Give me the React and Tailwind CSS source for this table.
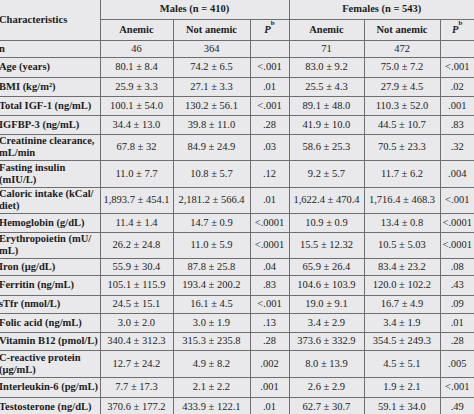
import React from 'react';

const rows = [
  { label: 'n', h: 'h-[17px]', v: ['46', '364', '', '71', '472', ''] },
  { label: 'Age (years)', h: 'h-[20px]', v: ['80.1 ± 8.4', '74.2 ± 6.5', '<.001', '83.0 ± 9.2', '75.0 ± 7.2', '<.001'] },
  { label: 'BMI (kg/m²)', h: 'h-[19px]', v: ['25.9 ± 3.3', '27.1 ± 3.3', '.01', '25.5 ± 4.3', '27.9 ± 4.5', '.02'] },
  { label: 'Total IGF-1 (ng/mL)', h: 'h-[19px]', v: ['100.1 ± 54.0', '130.2 ± 56.1', '<.001', '89.1 ± 48.0', '110.3 ± 52.0', '.001'] },
  { label: 'IGFBP-3 (ng/mL)', h: 'h-[19px]', v: ['34.4 ± 13.0', '39.8 ± 11.0', '.28', '41.9 ± 10.0', '44.5 ± 10.7', '.83'] },
  { label: ['Creatinine clearance,', 'mL/min'], h: 'h-[26px]', v: ['67.8 ± 32', '84.9 ± 24.9', '.03', '58.6 ± 25.3', '70.5 ± 23.3', '.32'] },
  { label: ['Fasting insulin', '(mIU/L)'], h: 'h-[27px]', v: ['11.0 ± 7.7', '10.8 ± 5.7', '.12', '9.2 ± 5.7', '11.7 ± 6.2', '.004'] },
  { label: ['Caloric intake (kCal/', 'diet)'], h: 'h-[26px]', v: ['1,893.7 ± 454.1', '2,181.2 ± 566.4', '.01', '1,622.4 ± 470.4', '1,716.4 ± 468.3', '<.001'] },
  { label: 'Hemoglobin (g/dL)', h: 'h-[19px]', v: ['11.4 ± 1.4', '14.7 ± 0.9', '<.0001', '10.9 ± 0.9', '13.4 ± 0.8', '<.0001'] },
  { label: ['Erythropoietin (mU/', 'mL)'], h: 'h-[26px]', v: ['26.2 ± 24.8', '11.0 ± 5.9', '<.0001', '15.5 ± 12.32', '10.5 ± 5.03', '<.0001'] },
  { label: 'Iron (μg/dL)', h: 'h-[17px]', v: ['55.9 ± 30.4', '87.8 ± 25.8', '.04', '65.9 ± 26.4', '83.4 ± 23.2', '.08'] },
  { label: 'Ferritin (ng/mL)', h: 'h-[20px]', v: ['105.1 ± 115.9', '193.4 ± 200.2', '.83', '104.6 ± 103.9', '120.0 ± 102.2', '.43'] },
  { label: 'sTfr (nmol/L)', h: 'h-[18px]', v: ['24.5 ± 15.1', '16.1 ± 4.5', '<.001', '19.0 ± 9.1', '16.7 ± 4.9', '.09'] },
  { label: 'Folic acid (ng/mL)', h: 'h-[19px]', v: ['3.0 ± 2.0', '3.0 ± 1.9', '.13', '3.4 ± 2.9', '3.4 ± 1.9', '.01'] },
  { label: 'Vitamin B12 (pmol/L)', h: 'h-[18px]', v: ['340.4 ± 312.3', '315.3 ± 235.8', '.28', '373.6 ± 332.9', '354.5 ± 249.3', '.28'] },
  { label: ['C-reactive protein', '(μg/mL)'], h: 'h-[27px]', v: ['12.7 ± 24.2', '4.9 ± 8.2', '.002', '8.0 ± 13.9', '4.5 ± 5.1', '.005'] },
  { label: 'Interleukin-6 (pg/mL)', h: 'h-[20px]', v: ['7.7 ± 17.3', '2.1 ± 2.2', '.001', '2.6 ± 2.9', '1.9 ± 2.1', '<.001'] },
  { label: 'Testosterone (ng/dL)', h: 'h-[20px]', v: ['370.6 ± 177.2', '433.9 ± 122.1', '.01', '62.7 ± 30.7', '59.1 ± 34.0', '.49'] },
];

const cell = 'border-b border-r border-[#6e6e70] p-0 align-middle';

const Pb = () => (
  <span>
    <i>P</i>
    <sup className="text-[7px] align-[4px]">b</sup>
  </span>
);

export default function App() {
  return (
    <div className="w-[474px] h-[414px] overflow-hidden bg-[#e9e9eb] text-[#1c1c1c] font-['Liberation_Serif','Times_New_Roman',serif] text-[10.5px] leading-[12px]">
      <table className="table-fixed border-collapse w-[475px] -ml-px">
        <colgroup>
          <col className="w-[101px]" />
          <col className="w-[73px]" />
          <col className="w-[77px]" />
          <col className="w-[39px]" />
          <col className="w-[75px]" />
          <col className="w-[76px]" />
          <col className="w-[34px]" />
        </colgroup>
        <thead className="font-bold">
          <tr className="h-[19px]">
            <th rowSpan={2} className={`${cell} text-left`}>Characteristics</th>
            <th colSpan={3} className={`${cell} text-center`}>Males (n = 410)</th>
            <th colSpan={3} className="border-b border-[#6e6e70] p-0 text-center">Females (n = 543)</th>
          </tr>
          <tr className="h-[21px]">
            <th className={`${cell} text-center`}>Anemic</th>
            <th className={`${cell} text-center`}>Not anemic</th>
            <th className={`${cell} text-center`}><Pb /></th>
            <th className={`${cell} text-center`}>Anemic</th>
            <th className={`${cell} text-center`}>Not anemic</th>
            <th className="border-b border-[#6e6e70] p-0 text-center"><Pb /></th>
          </tr>
        </thead>
        <tbody>
          {rows.map((r, i) => (
            <tr key={i} className={r.h}>
              <td className={`${cell} text-left font-bold whitespace-nowrap`}>
                {Array.isArray(r.label) ? (
                  <>
                    {r.label[0]}
                    <br />
                    {r.label[1]}
                  </>
                ) : (
                  r.label
                )}
              </td>
              {r.v.map((v, j) => (
                <td
                  key={j}
                  className={
                    j === 5
                      ? 'border-b border-[#6e6e70] p-0 align-middle text-center whitespace-nowrap'
                      : `${cell} text-center whitespace-nowrap`
                  }
                >
                  {v}
                </td>
              ))}
            </tr>
          ))}
        </tbody>
      </table>
    </div>
  );
}
